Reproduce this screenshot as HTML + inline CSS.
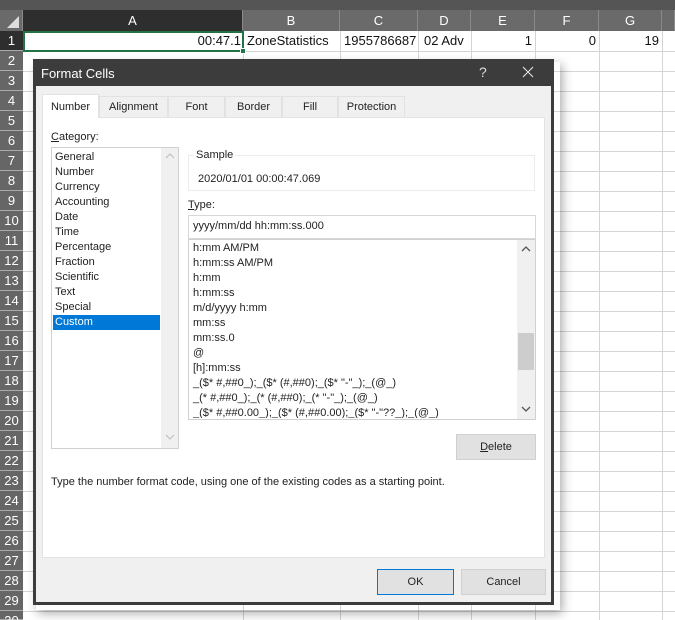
<!DOCTYPE html>
<html style="width:675px;height:620px;overflow:hidden"><head><style>
*{margin:0;padding:0;box-sizing:border-box}
body{width:675px;height:620px;overflow:hidden;background:#fff;font-family:"Liberation Sans",sans-serif;font-size:12px;color:#222;position:relative}
.a{position:absolute}
.ch{top:10px;height:21px;background:#6a6a6a;color:#fff;font-size:13px;text-align:center;line-height:21px;border-right:1px solid #8a8a8a}
.rh{left:0;width:23px;height:20px;background:#666;color:#fff;font-size:13px;text-align:center;line-height:20px;border-bottom:1px solid #aaa}
.vl{top:31px;width:1px;height:589px;background:#d4d4d4}
.hl{left:23px;width:652px;height:1px;background:#d4d4d4}
.c1{top:31px;height:20px;line-height:20px;font-size:13px;color:#111}
.tab{top:96px;height:21px;line-height:21px;text-align:center;font-size:11px;background:#f0f0f0;border:1px solid #e2e2e2;border-bottom:none}
.it{left:55px;font-size:11px;line-height:15px}
.ty{left:193px;font-size:11px;line-height:15px}
.btn{background:#e1e1e1;border:1px solid #d0d0d0;text-align:center;font-size:11px}
</style></head><body>
<div class="a" style="left:0;top:0;width:675px;height:10px;background:#555"></div>
<div class="a ch" style="left:0;width:23px;background:#6a6a6a"></div>
<div class="a" style="left:7px;top:16px;width:0;height:0;border-left:12px solid transparent;border-bottom:12px solid #ddd"></div>
<div class="a ch" style="left:23px;width:220px;background:#2e2e2e;border-bottom:1px solid #2e2e2e">A</div>
<div class="a ch" style="left:243px;width:97px">B</div>
<div class="a ch" style="left:340px;width:78px">C</div>
<div class="a ch" style="left:418px;width:53px">D</div>
<div class="a ch" style="left:471px;width:64px">E</div>
<div class="a ch" style="left:535px;width:64px">F</div>
<div class="a ch" style="left:599px;width:63px">G</div>
<div class="a ch" style="left:662px;width:13px"></div>
<div class="a vl" style="left:243px"></div><div class="a vl" style="left:340px"></div><div class="a vl" style="left:418px"></div><div class="a vl" style="left:471px"></div><div class="a vl" style="left:535px"></div><div class="a vl" style="left:599px"></div><div class="a vl" style="left:662px"></div>
<div class="a hl" style="top:51px"></div><div class="a hl" style="top:71px"></div><div class="a hl" style="top:91px"></div><div class="a hl" style="top:111px"></div><div class="a hl" style="top:131px"></div><div class="a hl" style="top:151px"></div><div class="a hl" style="top:171px"></div><div class="a hl" style="top:191px"></div><div class="a hl" style="top:211px"></div><div class="a hl" style="top:231px"></div><div class="a hl" style="top:251px"></div><div class="a hl" style="top:271px"></div><div class="a hl" style="top:291px"></div><div class="a hl" style="top:311px"></div><div class="a hl" style="top:331px"></div><div class="a hl" style="top:351px"></div><div class="a hl" style="top:371px"></div><div class="a hl" style="top:391px"></div><div class="a hl" style="top:411px"></div><div class="a hl" style="top:431px"></div><div class="a hl" style="top:451px"></div><div class="a hl" style="top:471px"></div><div class="a hl" style="top:491px"></div><div class="a hl" style="top:511px"></div><div class="a hl" style="top:531px"></div><div class="a hl" style="top:551px"></div><div class="a hl" style="top:571px"></div><div class="a hl" style="top:591px"></div><div class="a hl" style="top:611px"></div>
<div class="a rh" style="top:31px;background:#2e2e2e">1</div>
<div class="a rh" style="top:51px">2</div><div class="a rh" style="top:71px">3</div><div class="a rh" style="top:91px">4</div><div class="a rh" style="top:111px">5</div><div class="a rh" style="top:131px">6</div><div class="a rh" style="top:151px">7</div><div class="a rh" style="top:171px">8</div><div class="a rh" style="top:191px">9</div><div class="a rh" style="top:211px">10</div><div class="a rh" style="top:231px">11</div><div class="a rh" style="top:251px">12</div><div class="a rh" style="top:271px">13</div><div class="a rh" style="top:291px">14</div><div class="a rh" style="top:311px">15</div><div class="a rh" style="top:331px">16</div><div class="a rh" style="top:351px">17</div><div class="a rh" style="top:371px">18</div><div class="a rh" style="top:391px">19</div><div class="a rh" style="top:411px">20</div><div class="a rh" style="top:431px">21</div><div class="a rh" style="top:451px">22</div><div class="a rh" style="top:471px">23</div><div class="a rh" style="top:491px">24</div><div class="a rh" style="top:511px">25</div><div class="a rh" style="top:531px">26</div><div class="a rh" style="top:551px">27</div><div class="a rh" style="top:571px">28</div><div class="a rh" style="top:591px">29</div><div class="a rh" style="top:611px;height:9px">30</div>
<div class="a" style="left:23px;top:31px;width:221px;height:21px;border:2px solid #217346;background:#fff"></div>
<div class="a" style="left:240px;top:48px;width:6px;height:6px;background:#217346;border:1px solid #fff"></div>
<div class="a c1" style="left:23px;width:218px;text-align:right">00:47.1</div>
<div class="a c1" style="left:247px">ZoneStatistics</div>
<div class="a c1" style="left:344px">1955786687</div>
<div class="a c1" style="left:424px">02 Adv</div>
<div class="a c1" style="left:471px;width:61px;text-align:right">1</div>
<div class="a c1" style="left:535px;width:61px;text-align:right">0</div>
<div class="a c1" style="left:599px;width:60px;text-align:right">19</div>

<div class="a" style="left:36px;top:62px;width:524px;height:548px;box-shadow:2px 3px 10px rgba(0,0,0,.35)"></div>
<div class="a" style="left:33px;top:59px;width:521px;height:546px;background:#3c3c3c"></div>
<div class="a" style="left:41px;top:66px;color:#fff;font-size:13px">Format Cells</div>
<div class="a" style="left:479px;top:64px;color:#ddd;font-size:14px">?</div>
<svg class="a" style="left:522px;top:66px" width="12" height="12"><path d="M1 1L11 11M11 1L1 11" stroke="#ddd" stroke-width="1.2"/></svg>
<div class="a" style="left:36px;top:86px;width:515px;height:516px;background:#f0f0f0"></div>
<div class="a" style="left:42px;top:117px;width:503px;height:441px;background:#fff;border:1px solid #e3e3e3"></div>
<div class="a tab" style="left:42px;top:94px;height:24px;width:57px;background:#fff;line-height:25px">Number</div>
<div class="a tab" style="left:99px;width:69px">Alignment</div>
<div class="a tab" style="left:168px;width:57px">Font</div>
<div class="a tab" style="left:225px;width:57px">Border</div>
<div class="a tab" style="left:282px;width:56px">Fill</div>
<div class="a tab" style="left:338px;width:67px">Protection</div>
<div class="a" style="left:51px;top:131px;font-size:11px"><u>C</u>ategory:</div>
<div class="a" style="left:51px;top:147px;width:128px;height:302px;border:1px solid #d0d0d0;background:#fff"></div>
<div class="a" style="left:161px;top:148px;width:17px;height:300px;background:#f0f0f0"></div>
<svg class="a" style="left:165px;top:153px" width="10" height="6"><path d="M1 5L5 1L9 5" stroke="#bbb" fill="none"/></svg>
<svg class="a" style="left:165px;top:434px" width="10" height="6"><path d="M1 1L5 5L9 1" stroke="#bbb" fill="none"/></svg>
<div class="a" style="left:53px;top:315px;width:107px;height:15px;background:#0078d7"></div>
<div class="a it" style="top:150px">General</div><div class="a it" style="top:165px">Number</div><div class="a it" style="top:180px">Currency</div><div class="a it" style="top:195px">Accounting</div><div class="a it" style="top:210px">Date</div><div class="a it" style="top:225px">Time</div><div class="a it" style="top:240px">Percentage</div><div class="a it" style="top:255px">Fraction</div><div class="a it" style="top:270px">Scientific</div><div class="a it" style="top:285px">Text</div><div class="a it" style="top:300px">Special</div><div class="a it" style="top:315px;color:#fff">Custom</div>
<div class="a" style="left:188px;top:155px;width:347px;height:36px;border:1px solid #ececec"></div>
<div class="a" style="left:194px;top:149px;font-size:11px;background:#fff;padding:0 2px">Sample</div>
<div class="a" style="left:198px;top:173px;font-size:11px">2020/01/01 00:00:47.069</div>
<div class="a" style="left:188px;top:199px;font-size:11px"><u>T</u>ype:</div>
<div class="a" style="left:188px;top:215px;width:348px;height:24px;border:1px solid #d8d8d8;background:#fff"></div>
<div class="a" style="left:193px;top:220px;font-size:11px">yyyy/mm/dd hh:mm:ss.000</div>
<div class="a" style="left:188px;top:239px;width:348px;height:181px;border:1px solid #d0d0d0;background:#fff;overflow:hidden">
<div class="a" style="left:328px;top:0;width:18px;height:180px;background:#f0f0f0"></div>
<div class="a" style="left:329px;top:93px;width:16px;height:37px;background:#cdcdcd"></div>
<svg class="a" style="left:332px;top:6px" width="10" height="6"><path d="M1 5L5 1L9 5" stroke="#555" stroke-width="1.3" fill="none"/></svg>
<svg class="a" style="left:332px;top:166px" width="10" height="6"><path d="M1 1L5 5L9 1" stroke="#555" stroke-width="1.3" fill="none"/></svg>
</div>
<div class="a ty" style="top:241px">h:mm AM/PM</div><div class="a ty" style="top:256px">h:mm:ss AM/PM</div><div class="a ty" style="top:271px">h:mm</div><div class="a ty" style="top:286px">h:mm:ss</div><div class="a ty" style="top:301px">m/d/yyyy h:mm</div><div class="a ty" style="top:316px">mm:ss</div><div class="a ty" style="top:331px">mm:ss.0</div><div class="a ty" style="top:346px">@</div><div class="a ty" style="top:361px">[h]:mm:ss</div><div class="a ty" style="top:376px">_($* #,##0_);_($* (#,##0);_($* "-"_);_(@_)</div><div class="a ty" style="top:391px">_(* #,##0_);_(* (#,##0);_(* "-"_);_(@_)</div><div class="a ty" style="top:406px;height:12px;overflow:hidden">_($* #,##0.00_);_($* (#,##0.00);_($* "-"??_);_(@_)</div>
<div class="a btn" style="left:456px;top:434px;width:80px;height:26px;line-height:25px"><u>D</u>elete</div>
<div class="a" style="left:51px;top:476px;font-size:11px">Type the number format code, using one of the existing codes as a starting point.</div>
<div class="a btn" style="left:377px;top:569px;width:77px;height:26px;line-height:24px;border:1px solid #0078d7">OK</div>
<div class="a btn" style="left:461px;top:569px;width:85px;height:26px;line-height:24px">Cancel</div>
</body></html>
